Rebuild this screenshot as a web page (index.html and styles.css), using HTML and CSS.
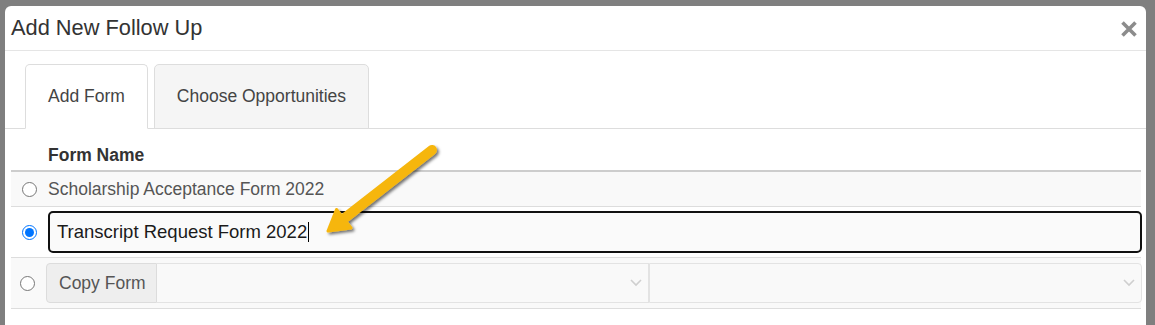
FILE: index.html
```html
<!DOCTYPE html>
<html>
<head>
<meta charset="utf-8">
<link rel="stylesheet" href="styles.css">
</head>
<body>
<div class="modal">
  <div class="modal-header">
    <div class="modal-title">Add New Follow Up</div>
    <svg class="close" width="18" height="18" viewBox="0 0 18 18"><path d="M2.5 2.5 L15.5 15.5 M15.5 2.5 L2.5 15.5" stroke="#8c8c8c" stroke-width="3.6" fill="none"/></svg>
  </div>
  <div class="tabs">
    <div class="tab active">Add Form</div>
    <div class="tab">Choose Opportunities</div>
  </div>
  <div class="grid">
    <div class="row head">
      <div class="cell-radio"></div>
      <div class="cell-main">Form Name</div>
    </div>
    <div class="row r1 striped">
      <div class="cell-radio"><input type="radio" name="f"></div>
      <div class="cell-main">Scholarship Acceptance Form 2022</div>
    </div>
    <div class="row r2">
      <div class="cell-radio"><input type="radio" name="f" checked></div>
      <div class="cell-main"><div class="text-input">Transcript Request Form 2022<span class="caret"></span></div></div>
    </div>
    <div class="row r3 striped">
      <div class="cell-radio r3-radio"><input type="radio" name="f"></div>
      <div class="input-group">
        <div class="addon">Copy Form</div>
        <div class="select first"><svg width="12" height="8" viewBox="0 0 12 8"><path d="M1 1 L6 6 L11 1" stroke="#cfcfcf" stroke-width="1.6" fill="none"/></svg></div>
        <div class="select last"><svg width="12" height="8" viewBox="0 0 12 8"><path d="M1 1 L6 6 L11 1" stroke="#cfcfcf" stroke-width="1.6" fill="none"/></svg></div>
      </div>
    </div>
  </div>
</div>
<svg class="arrow" width="1155" height="325" viewBox="0 0 1155 325">
  <defs>
    <filter id="sh" x="-20%" y="-20%" width="140%" height="140%">
      <feDropShadow dx="2" dy="2" stdDeviation="1.6" flood-color="#000" flood-opacity="0.55"/>
    </filter>
  </defs>
  <g filter="url(#sh)">
    <path d="M432 150 L346 217" stroke="#f6b60d" stroke-width="10" stroke-linecap="round" fill="none"/>
    <path d="M328 231 L336.5 209.5 L351 228 Z" fill="#f6b60d" stroke="#f6b60d" stroke-width="3" stroke-linejoin="round"/>
  </g>
</svg>
</body>
</html>
```
FILE: styles.css
```css
html, body {
  margin: 0;
  padding: 0;
}
body {
  background: #7f7f7f;
  font-family: "Liberation Sans", Arial, sans-serif;
  overflow: hidden;
  width: 1155px;
  height: 325px;
  position: relative;
}
.modal {
  margin: 6px 0 0 5px;
  width: 1141px;
  height: 319px;
  background: #fff;
  border-radius: 6px 6px 0 0;
}
.modal-header {
  height: 44px;
  border-bottom: 1px solid #e5e5e5;
  display: flex;
  align-items: center;
  justify-content: space-between;
  padding: 0 8px 0 6px;
}
.modal-title {
  font-size: 21.8px;
  color: #333;
  line-height: 26px;
}
.close {
  display: block;
  margin-top: 1px;
}
.tabs {
  display: flex;
  gap: 6px;
  margin-top: 13px;
  padding-left: 20px;
  border-bottom: 1px solid #ddd;
  height: 64px;
}
.tab {
  box-sizing: border-box;
  height: 65px;
  padding: 0 22px;
  border: 1px solid #ddd;
  border-radius: 5px 5px 0 0;
  background: #f5f5f5;
  display: flex;
  align-items: center;
  font-size: 17.5px;
  color: #444;
}
.tab.active {
  background: #fff;
  border-bottom-color: #fff;
}
.grid {
  margin-left: 6px;
  width: 1130px;
}
.row {
  display: flex;
  align-items: center;
  border-bottom: 1px solid #ddd;
  font-size: 17.5px;
  color: #555;
}
.row.striped {
  background: #f9f9f9;
}
.cell-radio {
  width: 37px;
  flex: none;
  box-sizing: border-box;
  padding-left: 11px;
  display: flex;
  align-items: center;
}
.cell-radio input {
  margin: 0;
  width: 15px;
  height: 15px;
}
.cell-main {
  flex: 1;
}
.row.head {
  height: 41px;
  align-items: flex-end;
  border-bottom: 2px solid #cdcdcd;
}
.row.head .cell-main {
  font-weight: bold;
  color: #333;
  line-height: 20px;
  padding-bottom: 5px;
}
.row.r1 {
  height: 34px;
}
.row.r2 {
  height: 50px;
}
.text-input {
  box-sizing: border-box;
  width: 1094px;
  height: 42px;
  border: 2px solid #111;
  border-radius: 5px;
  background: #fafafa;
  padding-left: 7px;
  display: flex;
  align-items: center;
  font-size: 18.5px;
  color: #1b1b1b;
}
.caret {
  display: inline-block;
  width: 1px;
  height: 20px;
  background: #000;
  margin-left: 1px;
}
.row.r3 {
  height: 50px;
}
.r3-radio {
  width: 35px;
  padding-left: 9px;
}
.input-group {
  display: flex;
  height: 40px;
  width: 1096px;
}
.addon {
  box-sizing: border-box;
  width: 111px;
  background: #eee;
  border: 1px solid #dcdcdc;
  border-radius: 4px 0 0 4px;
  display: flex;
  align-items: center;
  padding-left: 12px;
  color: #555;
}
.select {
  box-sizing: border-box;
  width: 492px;
  background: #f9f9f9;
  border: 1px solid #e3e3e3;
  border-left: none;
  display: flex;
  align-items: center;
  justify-content: flex-end;
  padding-right: 6px;
}
.select.last {
  border-left: 1px solid #e3e3e3;
  border-radius: 0 4px 4px 0;
  width: 493px;
}
.arrow {
  position: absolute;
  left: 0;
  top: 0;
  pointer-events: none;
}
```
